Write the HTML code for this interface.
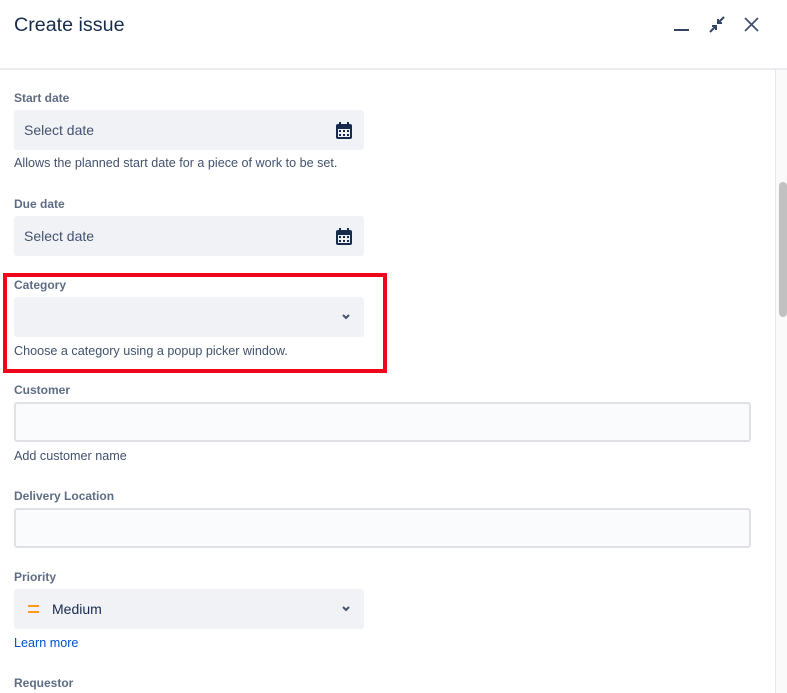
<!DOCTYPE html>
<html><head><style>
*{box-sizing:border-box;margin:0;padding:0}
body{width:787px;height:693px;overflow:hidden;background:#fff;font-family:"Liberation Sans",sans-serif;position:relative;color:#172b4d}
.a{position:absolute}
.title{left:14px;top:14px;font-size:19.7px;color:#172b4d}
.hr{left:0;top:68px;width:787px;height:2px;background:#ebecf0}
.lbl{font-size:12px;font-weight:bold;color:#5e6c84;left:14px}
.inp{left:14px;width:350px;height:40px;background:#f1f2f6;border-radius:3px}
.txt{left:14px;width:737px;height:40px;border:2px solid #dfe1e6;border-radius:3px;background:#fafbfc}
.ph{font-size:14px;color:#42526e;position:absolute;left:10px;top:12px}
.help{font-size:12.6px;color:#42526e;left:14px}
.cal{position:absolute;right:10px;top:11px}
.chev{position:absolute;right:13px;top:15px}
</style></head><body>
<div class="a title">Create issue</div>
<svg class="a" style="left:672px;top:16px" width="20" height="20"><line x1="2" y1="14" x2="17" y2="14" stroke="#344563" stroke-width="2"/></svg>
<svg class="a" style="left:706px;top:14px" width="22" height="22"><path d="M4 18 L10 12 M6 12 H10 V16" stroke="#344563" stroke-width="2" fill="none"/><path d="M18 3 L12 9 M12 5 V9 H16" stroke="#344563" stroke-width="2" fill="none"/></svg>
<svg class="a" style="left:742px;top:15px" width="20" height="20"><path d="M3 3 L16 16 M16 3 L3 16" stroke="#42526e" stroke-width="1.8"/></svg>
<div class="a hr"></div>
<div class="a" style="left:775px;top:70px;width:12px;height:623px;background:#fafafa;border-left:1px solid #e8e8e8"></div>
<div class="a" style="left:779px;top:182px;width:8px;height:135px;background:#c1c1c1;border-radius:4px"></div>

<div class="a lbl" style="top:91px">Start date</div>
<div class="a inp" style="top:110px"><span class="ph">Select date</span>
<svg class="cal" width="20" height="20"><rect x="2" y="3" width="16" height="15" rx="2" fill="#172b4d"/><rect x="4" y="8" width="12" height="8" fill="#f1f2f6"/><rect x="5" y="1" width="2" height="4" fill="#172b4d"/><rect x="13" y="1" width="2" height="4" fill="#172b4d"/><g fill="#172b4d"><rect x="5" y="9" width="2" height="2"/><rect x="9" y="9" width="2" height="2"/><rect x="13" y="9" width="2" height="2"/><rect x="5" y="13" width="2" height="2"/><rect x="9" y="13" width="2" height="2"/><rect x="13" y="13" width="2" height="2"/></g></svg></div>
<div class="a help" style="top:156px">Allows the planned start date for a piece of work to be set.</div>

<div class="a lbl" style="top:197px">Due date</div>
<div class="a inp" style="top:216px"><span class="ph">Select date</span>
<svg class="cal" width="20" height="20"><rect x="2" y="3" width="16" height="15" rx="2" fill="#172b4d"/><rect x="4" y="8" width="12" height="8" fill="#f1f2f6"/><rect x="5" y="1" width="2" height="4" fill="#172b4d"/><rect x="13" y="1" width="2" height="4" fill="#172b4d"/><g fill="#172b4d"><rect x="5" y="9" width="2" height="2"/><rect x="9" y="9" width="2" height="2"/><rect x="13" y="9" width="2" height="2"/><rect x="5" y="13" width="2" height="2"/><rect x="9" y="13" width="2" height="2"/><rect x="13" y="13" width="2" height="2"/></g></svg></div>

<div class="a" style="left:3px;top:273px;width:384px;height:100px;border:4px solid #f0071c"></div>
<div class="a lbl" style="top:278px">Category</div>
<div class="a inp" style="top:297px"><svg class="chev" width="10" height="10"><path d="M2 3 L5 6 L8 3" stroke="#42526e" stroke-width="2" fill="none"/></svg></div>
<div class="a help" style="top:344px">Choose a category using a popup picker window.</div>

<div class="a lbl" style="top:383px">Customer</div>
<div class="a txt" style="top:402px"></div>
<div class="a help" style="top:449px">Add customer name</div>

<div class="a lbl" style="top:489px">Delivery Location</div>
<div class="a txt" style="top:508px"></div>

<div class="a lbl" style="top:570px">Priority</div>
<div class="a inp" style="top:589px">
<svg class="a" style="left:13px;top:14px" width="14" height="12"><rect x="1" y="2" width="11" height="2" fill="#ff991f"/><rect x="1" y="8" width="11" height="2" fill="#ff991f"/></svg>
<span class="ph" style="left:38px;color:#172b4d">Medium</span>
<svg class="chev" width="10" height="10"><path d="M2 3 L5 6 L8 3" stroke="#42526e" stroke-width="2" fill="none"/></svg></div>
<div class="a help" style="top:636px;color:#0052cc">Learn more</div>
<div class="a lbl" style="top:676px">Requestor</div>
</body></html>
